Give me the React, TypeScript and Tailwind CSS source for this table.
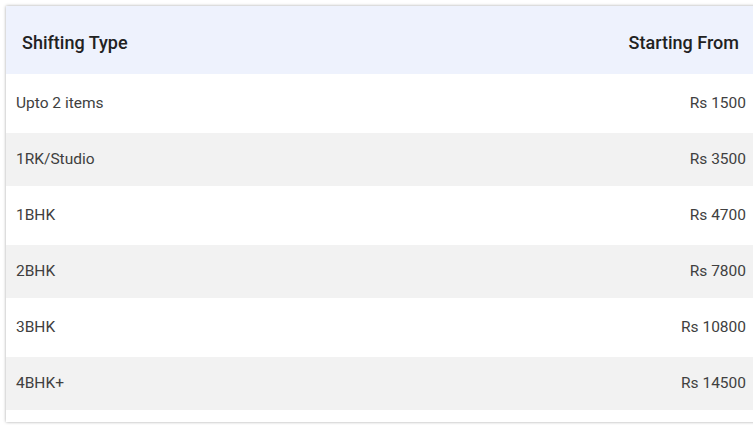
const rows = [
  { type: 'Upto 2 items', price: 'Rs 1500' },
  { type: '1RK/Studio', price: 'Rs 3500' },
  { type: '1BHK', price: 'Rs 4700' },
  { type: '2BHK', price: 'Rs 7800' },
  { type: '3BHK', price: 'Rs 10800' },
  { type: '4BHK+', price: 'Rs 14500' },
]

export default function App() {
  return (
    <div className="min-h-[425px] bg-white pl-[6px] pt-[6px] font-['Roboto',sans-serif]">
      <div className="w-[760px] bg-white pb-[12px] shadow-[0_0_3px_rgba(0,0,0,0.35)]">
        <table className="w-full border-collapse">
          <thead>
            <tr className="h-[68px] bg-[#eef2fd]">
              <th className="pl-[16px] pt-[4px] text-left text-[18px] font-medium text-[#222]">Shifting Type</th>
              <th className="pr-[27px] pt-[4px] text-right text-[18px] font-medium text-[#222]">Starting From</th>
            </tr>
          </thead>
          <tbody>
            {rows.map((r, i) => (
              <tr key={r.type} className={i % 2 ? 'h-[53px] bg-[#f2f2f2]' : 'h-[59px] bg-white'}>
                <td className="pl-[10px] text-[15.5px] text-[#404040]">{r.type}</td>
                <td className="pr-[20px] text-right text-[15.5px] text-[#404040]">{r.price}</td>
              </tr>
            ))}
          </tbody>
        </table>
      </div>
    </div>
  )
}
